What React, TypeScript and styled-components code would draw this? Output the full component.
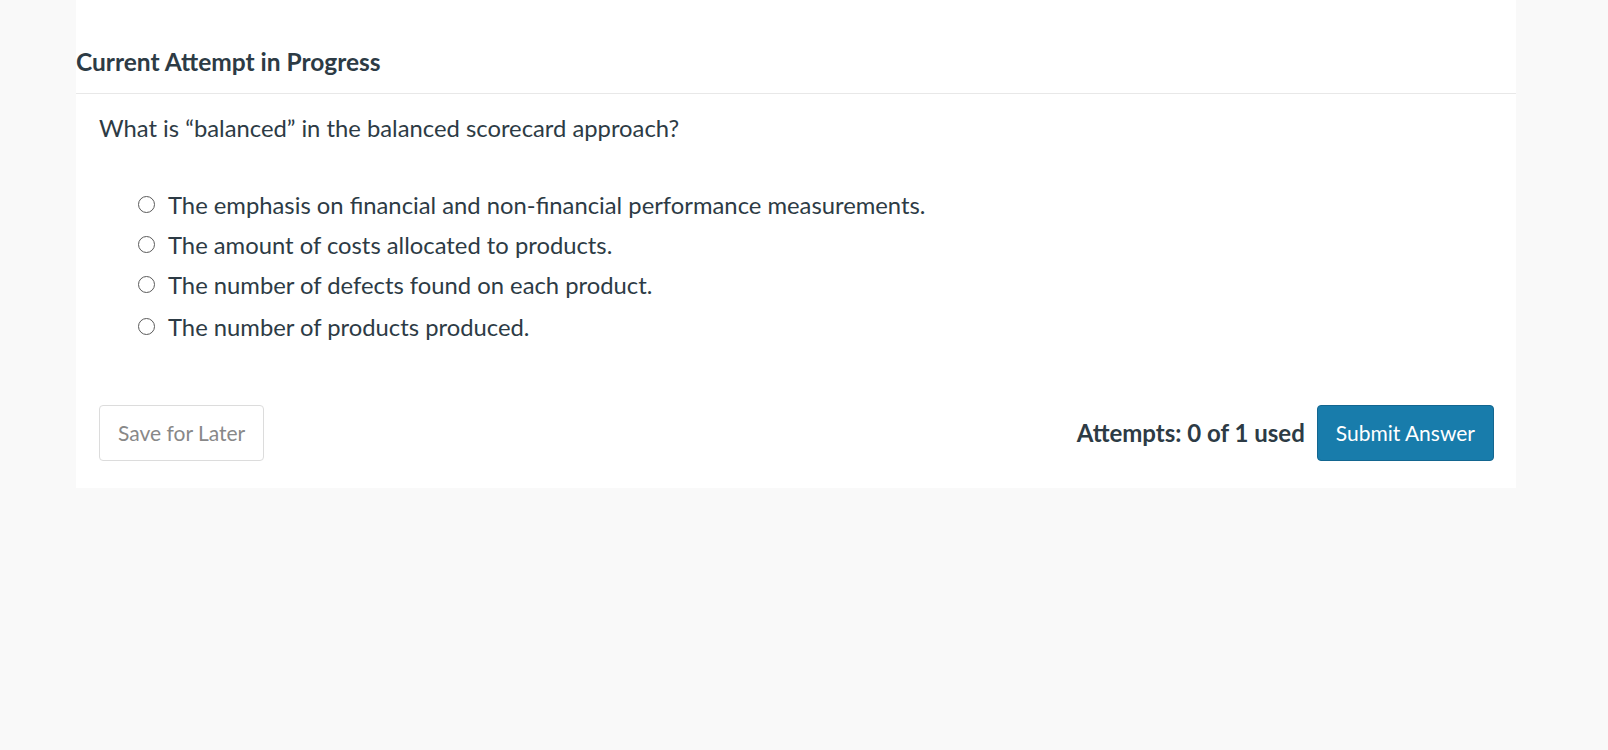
import React from 'react';
import styled, { createGlobalStyle } from 'styled-components';

const GlobalStyle = createGlobalStyle`
  html, body {
    margin: 0;
    padding: 0;
    background: #f9f9f9;
  }
  body {
    font-family: Lato, "Open Sans", "Liberation Sans", sans-serif;
    color: #2d3b45;
  }
`;

const Page = styled.div`
  min-height: 750px;
  padding-left: 76px;
`;

const Card = styled.section`
  width: 1440px;
  background: #ffffff;
`;

const Header = styled.header`
  height: 94px;
  display: flex;
  align-items: flex-end;
  padding-bottom: 17px;
  box-sizing: border-box;
  border-bottom: 1px solid #e8e8e8;
`;

const Title = styled.h2`
  margin: 0;
  font-size: 24.5px;
  font-weight: 700;
  line-height: 1.2;
`;

const Body = styled.div`
  padding: 17px 22px 27px 23px;
`;

const Question = styled.p`
  margin: 0;
  font-size: 23.8px;
  line-height: 1.5;
`;

const Options = styled.ul`
  list-style: none;
  margin: 40px 0 0;
  padding: 0 0 0 39px;
  display: flex;
  flex-direction: column;
  gap: 4px;
`;

const Option = styled.li`
  display: flex;
  align-items: center;
  gap: 13px;
  font-size: 23.8px;
  line-height: 36px;

  &:last-child {
    margin-top: 2px;
  }
`;

const Radio = styled.span`
  width: 17px;
  height: 17px;
  box-sizing: border-box;
  border: 1.5px solid #5a5a5a;
  border-radius: 50%;
  flex: none;
`;

const Footer = styled.div`
  margin-top: 60px;
  display: flex;
  align-items: center;
  justify-content: space-between;
`;

const Right = styled.div`
  display: flex;
  align-items: center;
  gap: 12px;
`;

const Attempts = styled.span`
  font-size: 24px;
  font-weight: 700;
`;

interface BtnProps {
  $primary?: boolean;
}

const Button = styled.button<BtnProps>`
  height: 56px;
  padding: 0 18px;
  font-family: inherit;
  font-size: 21px;
  border-radius: 4px;
  cursor: pointer;
  background: ${p => (p.$primary ? '#187cab' : '#ffffff')};
  color: ${p => (p.$primary ? '#ffffff' : '#888888')};
  border: 1px solid ${p => (p.$primary ? '#136690' : '#dcdcdc')};
`;

const answers = [
  'The emphasis on financial and non-financial performance measurements.',
  'The amount of costs allocated to products.',
  'The number of defects found on each product.',
  'The number of products produced.',
];

export default function App() {
  return (
    <Page>
      <GlobalStyle />
      <Card>
        <Header>
          <Title>Current Attempt in Progress</Title>
        </Header>
        <Body>
          <Question>What is “balanced” in the balanced scorecard approach?</Question>
          <Options>
            {answers.map(a => (
              <Option key={a}>
                <Radio />
                {a}
              </Option>
            ))}
          </Options>
          <Footer>
            <Button>Save for Later</Button>
            <Right>
              <Attempts>Attempts: 0 of 1 used</Attempts>
              <Button $primary>Submit Answer</Button>
            </Right>
          </Footer>
        </Body>
      </Card>
    </Page>
  );
}
